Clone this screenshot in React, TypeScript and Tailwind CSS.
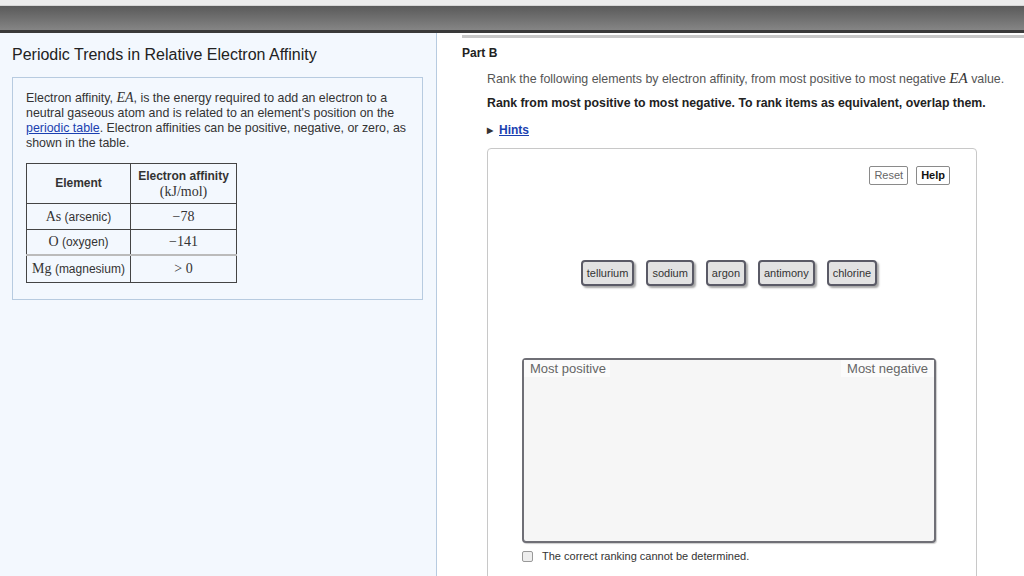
import React from "react";

const serif = { fontFamily: '"Liberation Serif", "Times New Roman", serif' };

function Token({ label }: { label: string }) {
  return (
    <div className="h-[26px] px-[4px] flex items-center rounded-[4px] border-2 border-[#5a5a66] bg-[#e2e2e2] text-[11px] text-[#333] shadow-[2px_2px_2px_rgba(0,0,0,0.35)]">
      {label}
    </div>
  );
}

export default function App() {
  return (
    <div
      className="w-[1024px] h-[576px] overflow-hidden bg-white flex flex-col"
      style={{ fontFamily: '"Liberation Sans", Arial, sans-serif' }}
    >
      <div className="h-[6px] bg-[#ebebeb] border-b border-[#d6d6d6] shrink-0" />
      <div className="h-[24px] bg-gradient-to-b from-[#5a5a5a] to-[#858585] shrink-0" />
      <div className="h-[3px] bg-[#3a3a3a] shrink-0" />
      <div className="flex flex-1 min-h-0">
        {/* Left panel */}
        <div className="w-[437px] shrink-0 bg-[#f3f8fe] border-r border-[#b7cbe0] pl-[12px] pr-[13px] pt-[12px]">
          <h1 className="text-[16px] leading-[20px] text-[#222]">
            Periodic Trends in Relative Electron Affinity
          </h1>
          <div className="mt-[12px] border border-[#b7cbe0] pl-[13px] pr-[8px] pt-[13px] pb-[16px] text-[12.4px] leading-[15px] text-[#333]">
            <p>
              Electron affinity, <span className="italic text-[14px] leading-[13px]" style={serif}>EA</span>, is the energy required to add an electron to a
              neutral gaseous atom and is related to an element's position on the{" "}
              <span className="text-[#1a3fb0] underline">periodic table</span>. Electron affinities can be positive, negative, or zero, as
              shown in the table.
            </p>
            <table className="mt-[12px] border-collapse text-[12px] text-[#333]">
              <tbody>
                <tr className="h-[40px]">
                  <td className="w-[104px] border border-[#444] text-center font-bold">Element</td>
                  <td className="w-[106px] border border-[#444] text-center leading-[15px]">
                    <div className="font-bold">Electron affinity</div>
                    <div className="text-[14px]" style={serif}>(kJ/mol)</div>
                  </td>
                </tr>
                <tr className="h-[26px]">
                  <td className="border border-[#444] text-center">
                    <span className="text-[14px]" style={serif}>As</span> (arsenic)
                  </td>
                  <td className="border border-[#444] text-center text-[14px]" style={serif}>−78</td>
                </tr>
                <tr className="h-[25px]">
                  <td className="border border-[#444] text-center">
                    <span className="text-[14px]" style={serif}>O</span> (oxygen)
                  </td>
                  <td className="border border-[#444] text-center text-[14px]" style={serif}>−141</td>
                </tr>
                <tr className="h-[28px] border-t-2 border-[#bbb]">
                  <td className="border border-[#444] text-center px-[1px]">
                    <span className="text-[14px]" style={serif}>Mg</span> (magnesium)
                  </td>
                  <td className="border border-[#444] text-center text-[14px]" style={serif}>&gt; 0</td>
                </tr>
              </tbody>
            </table>
          </div>
        </div>

        {/* Right panel */}
        <div className="flex-1 pl-[25px] min-w-0">
          <div className="h-[3px] bg-[#c8c8c8] mt-[2px]" />
          <div className="mt-[8px] text-[12px] font-bold text-[#222] leading-[15px]">Part B</div>
          <div className="pl-[25px]">
            <p className="mt-[10px] text-[12.4px] leading-[15px] text-[#555] whitespace-nowrap">
              Rank the following elements by electron affinity, from most positive to most negative{" "}
              <span className="italic text-[15px] leading-[15px] text-[#333]" style={serif}>EA</span> value.
            </p>
            <p className="mt-[9px] text-[12.3px] leading-[15px] font-bold text-[#222] whitespace-nowrap">
              Rank from most positive to most negative. To rank items as equivalent, overlap them.
            </p>
            <div className="mt-[12px] flex items-center gap-[6px] text-[12px] leading-[15px] font-bold">
              <span className="text-[8px] text-[#333]">▶</span>
              <span className="text-[#1a3fb0] underline">Hints</span>
            </div>
            <div className="mt-[10px] w-[490px] h-[500px] border border-[#c8c8c8] rounded-[4px]">
              <div className="flex justify-end gap-[8px] pr-[26px] pt-[17px]">
                <button className="h-[19px] px-[4px] border border-[#8a8a8a] rounded-[2px] text-[11px] text-[#666] bg-white">Reset</button>
                <button className="h-[19px] px-[4px] border border-[#8a8a8a] rounded-[2px] text-[11px] font-bold text-[#111] bg-white">Help</button>
              </div>
              <div className="mt-[75px] flex justify-center gap-[12px] pr-[6px]">
                <Token label="tellurium" />
                <Token label="sodium" />
                <Token label="argon" />
                <Token label="antimony" />
                <Token label="chlorine" />
              </div>
              <div className="mt-[72px] ml-[34px] mr-[40px] h-[185px] border-2 border-[#6f6f76] rounded-[4px] bg-[#f6f6f6] flex justify-between items-start shadow-[1px_1px_1px_rgba(0,0,0,0.2)]">
                <span className="bg-[#fbfbfb] pl-[6px] pr-[4px] text-[13px] leading-[17px] text-[#666]">Most positive</span>
                <span className="bg-[#fbfbfb] px-[6px] text-[13px] leading-[17px] text-[#666]">Most negative</span>
              </div>
              <div className="mt-[5px] ml-[34px] flex items-center gap-[9px]">
                <div className="w-[11px] h-[11px] border border-[#999] rounded-[2px] bg-[#eee]" />
                <span className="text-[11px] text-[#333]">The correct ranking cannot be determined.</span>
              </div>
            </div>
          </div>
        </div>
      </div>
    </div>
  );
}
